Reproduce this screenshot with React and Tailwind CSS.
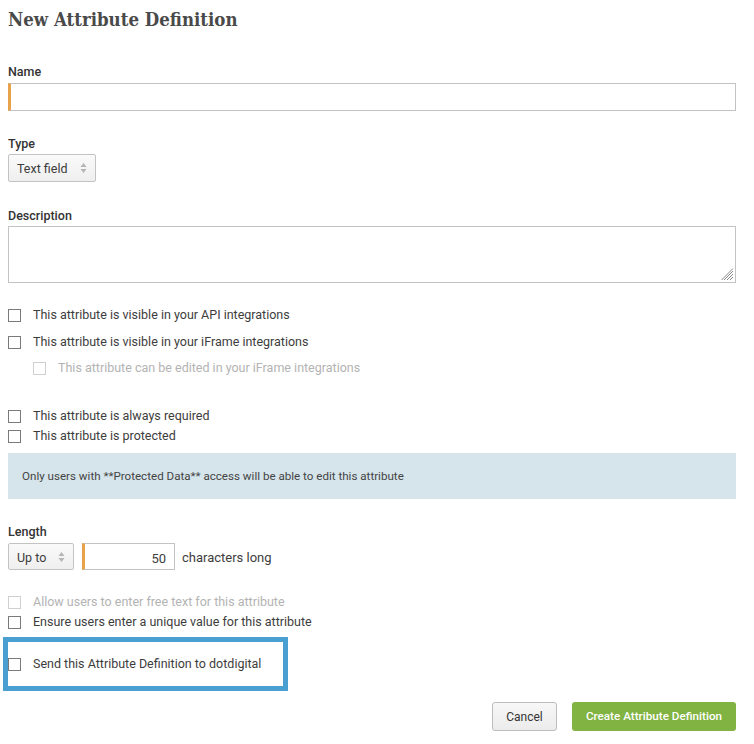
import React from 'react';

const font = { fontFamily: 'Roboto, "Liberation Sans", sans-serif' };

function Box({ disabled }) {
    return (
        <span
            className={`inline-block w-[13px] h-[13px] shrink-0 border bg-white ${disabled ? 'border-[#d0d0d0]' : 'border-[#7a7a7a]'}`}
        />
    );
}

function Check({ label, disabled, indent, className = '' }) {
    return (
        <label className={`flex items-center h-[20px] ${indent ? 'pl-[25px]' : ''} ${className}`}>
            <Box disabled={disabled} />
            <span className={`ml-[12px] text-[12.5px] ${disabled ? 'text-[#b3b3b3]' : 'text-[#3d3d3d]'}`}>{label}</span>
        </label>
    );
}

function Arrows() {
    return (
        <svg width="7" height="12" viewBox="0 0 7 12" className="shrink-0">
            <path d="M3.5 1 L6.5 5 L0.5 5 Z" fill="#b5b5b5" />
            <path d="M3.5 11 L6.5 7 L0.5 7 Z" fill="#b5b5b5" />
        </svg>
    );
}

function Select({ value, width }) {
    return (
        <div
            className={`${width} flex items-center justify-between pl-[8px] pr-[8px] bg-gradient-to-b from-[#fafafa] to-[#efefef] border border-[#c3c3c3] rounded-[2px] text-[12.5px] text-[#3d3d3d]`}
        >
            <span className="pt-[3px]">{value}</span>
            <Arrows />
        </div>
    );
}

export default function App() {
    return (
        <div className="bg-white w-[754px] h-[744px] pl-[8px] pr-[18px] text-[#3d3d3d]" style={font}>
            <div className="pt-[6px]">
                <h1
                    className="text-[18.5px] leading-[28px] font-bold text-[#4a4a4a]"
                    style={{ fontFamily: '"DejaVu Serif Condensed", "DejaVu Serif", "Liberation Serif", serif', fontStretch: 'condensed' }}
                >
                    New Attribute Definition
                </h1>
            </div>

            {/* Name */}
            <div className="mt-[30px] text-[12.5px] leading-[16px] font-medium text-[#333]">Name</div>
            <input
                className="mt-[3px] block w-full h-[28px] border border-[#c3c3c3] border-l-[3px] border-l-[#e8a24c] outline-none px-2 text-[13px]"
                type="text"
            />

            {/* Type */}
            <div className="mt-[25px] text-[12.5px] leading-[16px] font-medium text-[#333]">Type</div>
            <div className="mt-[2px] h-[28px] flex">
                <Select value="Text field" width="w-[88px]" />
            </div>

            {/* Description */}
            <div className="mt-[26px] text-[12.5px] leading-[16px] font-medium text-[#333]">Description</div>
            <div className="relative mt-[2px] h-[57px]">
                <textarea className="block w-full h-full resize-none border border-[#c3c3c3] outline-none p-2 text-[13px]" />
                <svg className="absolute right-[2px] bottom-[2px]" width="13" height="13" viewBox="0 0 13 13">
                    <path d="M12 3 L3 12 M12 6 L6 12 M12 9 L9 12 M12 0.5 L0.5 12" stroke="#8a8a8a" strokeWidth="1" />
                </svg>
            </div>

            {/* Integrations */}
            <div className="mt-[22px] flex flex-col">
                <Check label="This attribute is visible in your API integrations" />
                <Check className="mt-[7px]" label="This attribute is visible in your iFrame integrations" />
                <Check className="mt-[6px]" indent disabled label="This attribute can be edited in your iFrame integrations" />
            </div>

            <div className="mt-[28px] flex flex-col">
                <Check label="This attribute is always required" />
                <Check label="This attribute is protected" />
            </div>

            <div className="mt-[7px] h-[46px] flex items-center px-[14px] pt-[2px] bg-[#d6e4eb] text-[11.6px] text-[#444]">
                Only users with **Protected Data** access will be able to edit this attribute
            </div>

            {/* Length */}
            <div className="mt-[25px] text-[12.5px] leading-[16px] font-medium text-[#333]">Length</div>
            <div className="mt-[3px] h-[27px] flex items-center">
                <Select value="Up to" width="w-[66px] h-full" />
                <input
                    className="ml-[8px] w-[93px] h-full border border-[#c3c3c3] border-l-[3px] border-l-[#e8a24c] outline-none pr-[8px] pt-[3px] text-right text-[13px] text-[#3d3d3d]"
                    type="text"
                    defaultValue="50"
                />
                <span className="ml-[7px] pt-[2px] text-[13px]">characters long</span>
            </div>

            <div className="mt-[22px] flex flex-col">
                <Check disabled label="Allow users to enter free text for this attribute" />
                <Check label="Ensure users enter a unique value for this attribute" />
            </div>

            <div className="mt-[5px] -ml-[5px] w-[285px] h-[54px] border-[5px] border-[#4a9fd2] flex items-center">
                <Check label="Send this Attribute Definition to dotdigital" />
            </div>

            {/* Actions */}
            <div className="mt-[11px] flex justify-end gap-[15px]">
                <button className="w-[65px] h-[29px] bg-gradient-to-b from-[#f7f7f7] to-[#ececec] border border-[#bdbdbd] rounded-[3px] text-[12px] text-[#333]">
                    Cancel
                </button>
                <button className="w-[164px] h-[29px] bg-[#80b341] rounded-[3px] text-[11.7px] font-medium text-white">
                    Create Attribute Definition
                </button>
            </div>
        </div>
    );
}
